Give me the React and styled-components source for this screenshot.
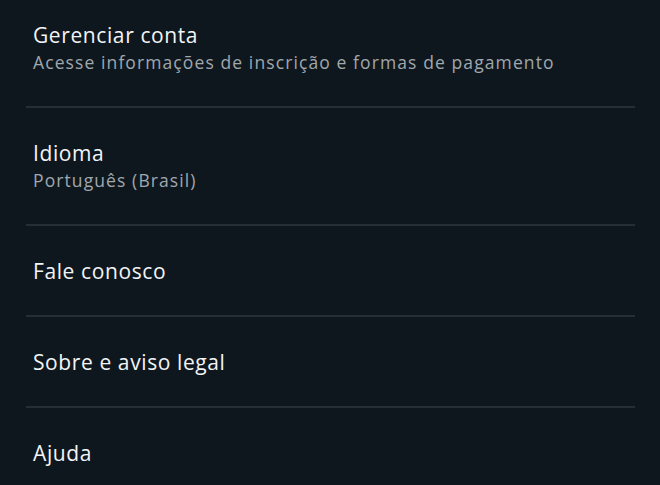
import React from "react"
import styled, { createGlobalStyle } from "styled-components"

const GlobalStyle = createGlobalStyle`
  html, body {
    margin: 0;
    padding: 0;
    background: #0f171e;
  }
  body {
    font-family: "Open Sans", "Noto Sans", "Liberation Sans", sans-serif;
    -webkit-font-smoothing: antialiased;
  }
`

const Screen = styled.div`
  width: 660px;
  height: 485px;
  overflow: hidden;
  background: #0f171e;
`

const SettingsList = styled.ul`
  list-style: none;
  margin: -10px 25px 0 26px;
  padding: 0;
`

const SettingsRow = styled.li`
  display: flex;
  flex-direction: column;
  padding: 31px 7px 30px;
  border-bottom: 2px solid #252d35;
  cursor: pointer;

  &:last-child {
    border-bottom: none;
  }
`

const RowTitle = styled.span`
  font-size: 21px;
  line-height: 28px;
  color: #f2f4f6;
  letter-spacing: 0.6px;
`

const RowSubtitle = styled.span`
  font-size: 17.5px;
  line-height: 27px;
  color: #a0a7ad;
  letter-spacing: 1.1px;
`

const items = [
  { title: "Gerenciar conta", subtitle: "Acesse informações de inscrição e formas de pagamento" },
  { title: "Idioma", subtitle: "Português (Brasil)" },
  { title: "Fale conosco" },
  { title: "Sobre e aviso legal" },
  { title: "Ajuda" },
]

function App() {
  return (
    <Screen>
      <GlobalStyle />
      <SettingsList>
        {items.map((item) => (
          <SettingsRow key={item.title}>
            <RowTitle>{item.title}</RowTitle>
            {item.subtitle && <RowSubtitle>{item.subtitle}</RowSubtitle>}
          </SettingsRow>
        ))}
      </SettingsList>
    </Screen>
  )
}

export default App
